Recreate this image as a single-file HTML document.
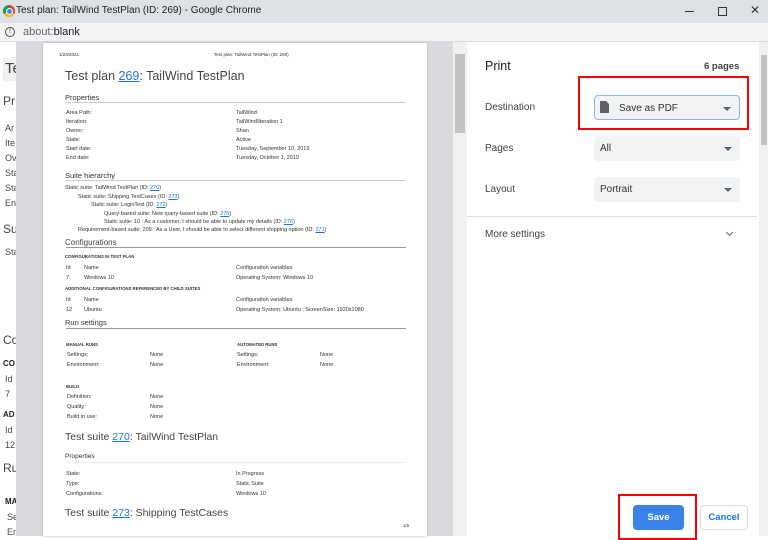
<!DOCTYPE html>
<html><head><meta charset="utf-8"><style>
*{margin:0;padding:0;box-sizing:border-box}
body{width:768px;height:536px;overflow:hidden;position:relative;background:#fff;font-family:"Liberation Sans",sans-serif;color:#333}
.a{position:absolute;white-space:nowrap}
.pg{font-size:5.5px;color:#333}
.h{font-size:7.5px;color:#333}
.ln{position:absolute;height:1px;background:#ccc;left:66px;width:340px}
.lk{color:#1a73e8;text-decoration:underline}
.sel{position:absolute;left:594px;width:146px;height:25px;background:#f1f3f4;border-radius:4px;font-size:10px;color:#333;padding:7px 0 0 6px}
.sel:after{content:"";position:absolute;right:8px;top:11px;border-left:4px solid transparent;border-right:4px solid transparent;border-top:4px solid #5f6368}
.lb{font-size:10px;color:#3c4043}
</style></head><body>
<!-- title bar -->
<div class="a" style="left:0;top:0;width:768px;height:23px;background:#dee1e6"></div>
<div class="a" style="left:3px;top:5px;width:12px;height:12px;border-radius:50%;background:conic-gradient(#db4437 0 120deg,#f4b400 120deg 240deg,#0f9d58 240deg);"></div>
<div class="a" style="left:6.5px;top:8.5px;width:5px;height:5px;border-radius:50%;background:#4285f4;box-shadow:0 0 0 1px #fff"></div>
<div class="a" style="left:16px;top:5px;font-size:10px;color:#202124">Test plan: TailWind TestPlan (ID: 269) - Google Chrome</div>
<div class="a" style="left:685px;top:11px;width:9px;height:1px;background:#333"></div>
<div class="a" style="left:718px;top:7px;width:9px;height:9px;border:1px solid #333"></div>
<div class="a" style="left:750px;top:3px;font-size:12px;color:#333">✕</div>
<!-- address bar -->
<div class="a" style="left:0;top:23px;width:768px;height:19px;background:#f1f3f4;border-bottom:1px solid #dadce0"></div>
<div class="a" style="left:5px;top:27px;width:10px;height:10px;border:1px solid #555;border-radius:50%;font-size:7px;text-align:center;line-height:8px;color:#555">!</div>
<div class="a" style="left:23px;top:26px;font-size:11px;color:#666">about:<span style="color:#202124">blank</span></div>
<!-- behind page left -->
<div class="a" style="left:3px;top:57px;width:14px;height:24px;background:#f1f1f1"></div>
<div class="a" style="left:5px;top:60px;font-size:15px;color:#444">Te</div>
<div class="a" style="left:3px;top:94px;font-size:12px;color:#444">Pr</div>
<div class="a" style="left:5px;top:121px;font-size:9px;line-height:15px;color:#444">Ar<br>Ite<br>Ov<br>Sta<br>Sta<br>En</div>
<div class="a" style="left:3px;top:222px;font-size:12px;color:#444">Su</div>
<div class="a" style="left:5px;top:247px;font-size:9px;color:#444">Sta</div>
<div class="a" style="left:3px;top:333px;font-size:12px;color:#444">Co</div>
<div class="a" style="left:3px;top:359px;font-size:8px;font-weight:bold;color:#222">CO</div>
<div class="a" style="left:5px;top:372px;font-size:9px;line-height:15px;color:#444">Id<br>7</div>
<div class="a" style="left:3px;top:410px;font-size:8px;font-weight:bold;color:#222">AD</div>
<div class="a" style="left:5px;top:423px;font-size:9px;line-height:15px;color:#444">Id<br>12</div>
<div class="a" style="left:3px;top:461px;font-size:12px;color:#444">Ru</div>
<div class="a" style="left:5px;top:497px;font-size:8px;font-weight:bold;color:#222">MA</div>
<div class="a" style="left:7px;top:510px;font-size:9px;line-height:15px;color:#444">Se<br>En</div>
<!-- preview area -->
<div class="a" style="left:16px;top:42px;width:437px;height:494px;background:#d9dadd"></div>
<div class="a" style="left:453px;top:42px;width:14px;height:494px;background:#f1f1f1"></div>
<div class="a" style="left:455px;top:54px;width:10px;height:79px;background:#c1c1c1"></div>
<div class="a" style="left:43px;top:43px;width:384px;height:493px;background:#fff;box-shadow:0 0 2px #aaa"></div>
<div class="a pg" style="left:59px;top:52px;font-size:4.5px">1/23/2021</div>
<div class="a pg" style="left:214px;top:52px;font-size:4.5px">Test plan: TailWind TestPlan (ID: 269)</div>
<div class="a" style="left:65px;top:69px;font-size:12.5px;color:#444">Test plan <span class="lk">269</span>: TailWind TestPlan</div>
<div class="a h" style="left:65px;top:93px">Properties</div><div class="ln" style="top:102px"></div>
<div class="a pg" style="left:66px;top:109px;line-height:8.9px">Area Path:<br>Iteration:<br>Owner:<br>State:<br>Start date:<br>End date:</div>
<div class="a pg" style="left:236px;top:109px;line-height:8.9px">TailWind<br>TailWind\Iteration 1<br>Shan<br>Active<br>Tuesday, September 10, 2019<br>Tuesday, October 1, 2019</div>
<div class="a h" style="left:65px;top:171px">Suite hierarchy</div><div class="ln" style="top:180px"></div>
<div class="a pg" style="left:65px;top:185px">Static suite: TailWind TestPlan (ID: <span class="lk">270</span>)</div>
<div class="a pg" style="left:78px;top:194px">Static suite: Shipping TestCases (ID: <span class="lk">273</span>)</div>
<div class="a pg" style="left:91px;top:202px">Static suite: LoginTest (ID: <span class="lk">272</span>)</div>
<div class="a pg" style="left:104px;top:211px">Query-based suite: New query-based suite (ID: <span class="lk">275</span>)</div>
<div class="a pg" style="left:104px;top:219px">Static suite: 10 : As a customer, I should be able to update my details (ID: <span class="lk">276</span>)</div>
<div class="a pg" style="left:78px;top:227px">Requirement-based suite: 209 : As a User, I should be able to select different shipping option (ID: <span class="lk">271</span>)</div>
<div class="a" style="left:65px;top:238px;font-size:8px;color:#444">Configurations</div><div class="ln" style="top:247px;background:#999"></div>
<div class="a pg" style="left:65px;top:254px;font-size:4.3px;font-weight:bold">CONFIGURATIONS IN TEST PLAN</div>
<div class="a pg" style="left:66px;top:263px;line-height:10px">Id<br>7</div>
<div class="a pg" style="left:84px;top:263px;line-height:10px">Name<br>Windows 10</div>
<div class="a pg" style="left:236px;top:263px;line-height:10px">Configuration variables<br>Operating System: Windows 10</div>
<div class="a pg" style="left:65px;top:286px;font-size:4.3px;font-weight:bold">ADDITIONAL CONFIGURATIONS REFERENCED BY CHILD SUITES</div>
<div class="a pg" style="left:66px;top:295px;line-height:10px">Id<br>12</div>
<div class="a pg" style="left:84px;top:295px;line-height:10px">Name<br>Ubuntu</div>
<div class="a pg" style="left:236px;top:295px;line-height:10px">Configuration variables<br>Operating System: Ubuntu ; ScreenSize: 1920x1080</div>
<div class="a h" style="left:65px;top:318px">Run settings</div><div class="ln" style="top:328px;background:#999"></div>
<div class="a pg" style="left:66px;top:342px;font-size:4.3px;font-weight:bold">MANUAL RUNS</div>
<div class="a pg" style="left:237px;top:342px;font-size:4.3px;font-weight:bold">AUTOMATED RUNS</div>
<div class="a pg" style="left:67px;top:350px;line-height:10px">Settings:<br>Environment:</div>
<div class="a pg" style="left:150px;top:350px;line-height:10px">None<br>None</div>
<div class="a pg" style="left:237px;top:350px;line-height:10px">Settings:<br>Environment:</div>
<div class="a pg" style="left:320px;top:350px;line-height:10px">None<br>None</div>
<div class="a pg" style="left:66px;top:384px;font-size:4.3px;font-weight:bold">BUILD</div>
<div class="a pg" style="left:67px;top:392px;line-height:10px">Definition:<br>Quality:<br>Build in use:</div>
<div class="a pg" style="left:150px;top:392px;line-height:10px">None<br>None<br>None</div>
<div class="a" style="left:65px;top:431px;font-size:10.5px;color:#444">Test suite <span class="lk">270</span>: TailWind TestPlan</div>
<div class="a h" style="left:65px;top:453px;font-size:6.5px">Properties</div><div class="ln" style="top:462px;background:#eee"></div>
<div class="a pg" style="left:66px;top:469px;line-height:10px">State:<br>Type:<br>Configurations:</div>
<div class="a pg" style="left:236px;top:469px;line-height:10px">In Progress<br>Static Suite<br>Windows 10</div>
<div class="a" style="left:65px;top:507px;font-size:10.5px;color:#444">Test suite <span class="lk">273</span>: Shipping TestCases</div>
<div class="a pg" style="left:403px;top:523px;font-size:4.3px">1/6</div>
<!-- print panel -->
<div class="a" style="left:485px;top:59px;font-size:12.5px;color:#202124">Print</div>
<div class="a" style="left:704px;top:61px;font-size:9.5px;font-weight:bold;color:#3c4043">6 pages</div>
<div class="a lb" style="left:485px;top:102px">Destination</div>
<div class="sel" style="top:95px;border:1px solid #8ab4f8;padding-left:24px">Save as PDF</div>
<svg class="a" style="left:600px;top:101px" width="9" height="12" viewBox="0 0 9 12"><path d="M0 0h6l3 3v9H0z" fill="#5f6368"/></svg>
<div class="a" style="left:578px;top:76px;width:171px;height:54px;border:2px solid #f00"></div>
<div class="a lb" style="left:485px;top:143px">Pages</div>
<div class="sel" style="top:136px">All</div>
<div class="a lb" style="left:485px;top:184px">Layout</div>
<div class="sel" style="top:177px">Portrait</div>
<div class="a" style="left:467px;top:216px;width:290px;height:1px;background:#e0e0e0"></div>
<div class="a lb" style="left:485px;top:229px">More settings</div>
<div class="a" style="left:727px;top:230px;width:5px;height:5px;border-right:1.3px solid #5f6368;border-bottom:1.3px solid #5f6368;transform:rotate(45deg)"></div>
<div class="a" style="left:633px;top:505px;width:51px;height:25px;background:#3b82e8;border-radius:4px;color:#fff;font-size:9.5px;font-weight:bold;text-align:center;line-height:25px">Save</div>
<div class="a" style="left:700px;top:505px;width:48px;height:25px;border:1px solid #dadce0;border-radius:4px;color:#1a73e8;font-size:9.5px;font-weight:bold;text-align:center;line-height:23px">Cancel</div>
<div class="a" style="left:618px;top:494px;width:79px;height:46px;border:2px solid #f00"></div>
<div class="a" style="left:759px;top:42px;width:9px;height:494px;background:#f1f1f1"></div>
<div class="a" style="left:761px;top:55px;width:6px;height:90px;background:#c1c1c1"></div>
</body></html>
